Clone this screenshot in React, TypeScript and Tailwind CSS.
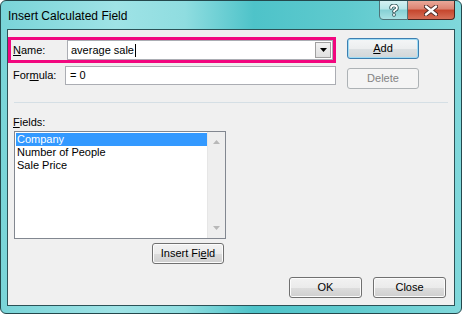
import React from "react";

const font = { fontFamily: '"Liberation Sans", Arial, sans-serif' };

function Btn({
  children,
  w = 72,
  variant = "normal",
}: {
  children: React.ReactNode;
  w?: number;
  variant?: "normal" | "default" | "disabled";
}) {
  const base =
    "h-[21px] rounded-[3px] border flex items-center justify-center text-[11px] leading-none relative";
  if (variant === "disabled") {
    return (
      <div
        className={`${base} border-[#adb2b5] bg-[#f4f4f4] text-[#838383]`}
        style={{ width: w }}
      >
        {children}
      </div>
    );
  }
  if (variant === "default") {
    return (
      <div
        className={`${base} border-[#3c7fb1] bg-[linear-gradient(#f4f6f7_0%,#eceeef_50%,#dde1e3_51%,#d2d6d8_100%)] text-black shadow-[inset_0_0_0_1px_#9fdcf5]`}
        style={{ width: w }}
      >
        {children}
      </div>
    );
  }
  return (
    <div
      className={`${base} border-[#707070] bg-[linear-gradient(#f2f2f2_0%,#ebebeb_50%,#dddddd_51%,#cfcfcf_100%)] text-black shadow-[inset_0_0_0_1px_#fcfcfc]`}
      style={{ width: w }}
    >
      {children}
    </div>
  );
}

export default function App() {
  return (
    <div className="w-[463px] h-[316px] bg-white" style={font}>
      <div className="w-[462px] h-[314px] border border-[#24484c] rounded-t-[6px] rounded-b-[6px] bg-[linear-gradient(90deg,#79d4d8_0%,#9fe3e6_25%,#8fdde0_40%,#4ec3c9_55%,#5fcace_75%,#80d8db_100%)] flex flex-col overflow-hidden">
        {/* Title bar */}
        <div className="h-[28px] flex justify-between items-start pl-[7px] pr-[6px] shrink-0">
          <div className="text-[12px] text-black mt-[8px] leading-[14px]">
            Insert Calculated Field
          </div>
          <div className="flex -mt-px">
            <div className="w-[29px] h-[20px] border border-[#4f7378] rounded-bl-[4px] bg-[linear-gradient(#d4f1f2_0%,#b5e6e8_45%,#86d0d4_50%,#a9e2e4_100%)] flex items-center justify-center">
              <svg width="10" height="13" viewBox="0 0 10 13">
                <path
                  d="M2 4 Q2 1.5 5 1.5 Q8 1.5 8 4 Q8 5.5 5.5 6.5 L5 7.5 M5 10.5 L5 11"
                  stroke="#33565a"
                  strokeWidth="3.6"
                  fill="none"
                  strokeLinecap="round"
                />
                <path
                  d="M2 4 Q2 1.5 5 1.5 Q8 1.5 8 4 Q8 5.5 5.5 6.5 L5 7.5 M5 10.5 L5 11"
                  stroke="#ffffff"
                  strokeWidth="1.8"
                  fill="none"
                  strokeLinecap="round"
                />
              </svg>
            </div>
            <div className="w-[47px] h-[20px] border border-l-0 border-[#4a2620] rounded-br-[4px] bg-[linear-gradient(#e9a899_0%,#dc8370_45%,#c5452c_50%,#d66f58_100%)] flex items-center justify-center">
              <svg width="14" height="11" viewBox="0 0 14 11">
                <path
                  d="M2 1.5 L12 9.5 M12 1.5 L2 9.5"
                  stroke="#4a2a25"
                  strokeWidth="4.2"
                  strokeLinecap="round"
                />
                <path
                  d="M2 1.5 L12 9.5 M12 1.5 L2 9.5"
                  stroke="#ffffff"
                  strokeWidth="2.4"
                  strokeLinecap="round"
                />
              </svg>
            </div>
          </div>
        </div>

        {/* Client area */}
        <div className="mx-[6px] h-[277px] border border-[#2c5257] bg-[#f0f0f0] flex flex-col text-[11px] text-black">
          {/* Top row */}
          <div className="h-[59px] flex items-start pt-[7px]">
            <div className="w-[328px] flex flex-col">
              <div className="h-[26px] border-[3px] border-[#f2077f] flex items-center">
                <span className="ml-[2px] w-[54px]">
                  <span className="underline">N</span>ame:
                </span>
                <div className="h-[20px] flex-1 border border-[#abadb3] bg-white flex items-center justify-between">
                  <span className="pl-[3px] flex items-center">
                    average sale
                    <span className="inline-block w-px h-[13px] bg-black ml-px" />
                  </span>
                  <div className="w-[16px] h-[16px] mr-px border border-[#a0a0a0] bg-[linear-gradient(#f2f2f2,#e0e0e0)] flex items-center justify-center">
                    <svg width="7" height="4" viewBox="0 0 7 4">
                      <path d="M0 0 H7 L3.5 4 Z" fill="#000" />
                    </svg>
                  </div>
                </div>
              </div>
              <div className="flex items-center mt-[3px]">
                <span className="ml-[5px] w-[52px]">
                  For<span className="underline">m</span>ula:
                </span>
                <div className="h-[19px] flex-1 border border-[#abadb3] bg-white flex items-center pl-[4px]">
                  = 0
                </div>
              </div>
            </div>
            <div className="ml-[11px] flex flex-col pt-px">
              <Btn variant="default">
                <span>
                  <span className="underline">A</span>dd
                </span>
              </Btn>
              <div className="h-[9px]" />
              <Btn variant="disabled">Delete</Btn>
            </div>
          </div>

          {/* Separator */}
          <div className="mt-[13px] mx-[6px] h-px bg-[#d5dfe5]" />

          {/* Fields */}
          <div className="mt-[13px] ml-[5px] leading-[13px]">
            <span className="underline">F</span>ields:
          </div>
          <div className="mt-[2px] ml-[6px] w-[212px] h-[108px] border border-[#828790] bg-white flex">
            <div className="flex-1 pt-px pl-px flex flex-col leading-[13px]">
              <div className="h-[13px] bg-[#3399ff] text-white pl-[1px]">
                Company
              </div>
              <div className="h-[13px] pl-[1px]">Number of People</div>
              <div className="h-[13px] pl-[1px]">Sale Price</div>
            </div>
            <div className="w-[18px] bg-[#eeeeee] border-l border-[#e6e6e6] flex flex-col justify-between items-center py-[8px]">
              <svg width="7" height="4" viewBox="0 0 7 4">
                <path d="M0 4 H7 L3.5 0 Z" fill="#b8b8b8" />
              </svg>
              <svg width="7" height="4" viewBox="0 0 7 4">
                <path d="M0 0 H7 L3.5 4 Z" fill="#b8b8b8" />
              </svg>
            </div>
          </div>
          <div className="mt-[4px] ml-[144px]">
            <Btn>
              <span>
                Insert Fi<span className="underline">e</span>ld
              </span>
            </Btn>
          </div>

          {/* Bottom buttons */}
          <div className="mt-[13px] flex justify-end gap-[11px] pr-[8px]">
            <Btn w={73}>OK</Btn>
            <Btn w={73}>Close</Btn>
          </div>
        </div>
      </div>
    </div>
  );
}
